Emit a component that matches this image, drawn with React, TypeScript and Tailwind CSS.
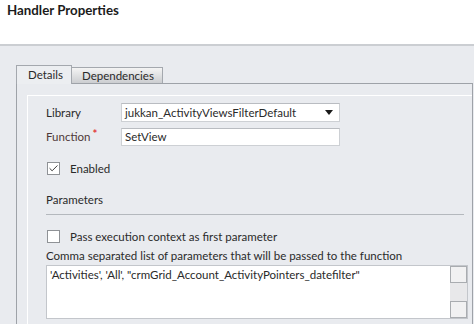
import { Check } from 'lucide-react'

function Checkbox({ checked }: { checked?: boolean }) {
  return (
    <div className="w-[13px] h-[13px] shrink-0 bg-white border border-[#8f9296] flex items-center justify-center">
      {checked && <Check size={11} strokeWidth={2} className="text-[#2b2b2b]" />}
    </div>
  )
}

export default function App() {
  return (
    <div
      className="w-[474px] h-[324px] overflow-hidden bg-white flex flex-col text-[11.5px] text-[#2a2a2a]"
      style={{ fontFamily: 'Lato, "Noto Sans", sans-serif' }}
    >
      {/* Title */}
      <div className="h-[44px] shrink-0 px-[7px] pt-[2px] leading-[17px]">
        <span className="font-bold text-[13.3px] text-[#1b1b1b]">Handler Properties</span>
      </div>

      {/* Gray section */}
      <div className="flex-1 min-h-0 bg-[#e9ebef] border-t-2 border-[#cbced2] pl-[16px] pt-[19px] flex flex-col">
        {/* Tabs */}
        <div className="flex items-end h-[19px] shrink-0">
          <div className="w-[56px] h-[19px] border border-b-0 border-[#a4a8ae] bg-[#eceef1] pl-[11px] leading-[18px] z-10">
            Details
          </div>
          <div className="w-[91px] h-[17px] border border-l-0 border-b-0 border-[#a4a8ae] bg-gradient-to-b from-[#f4f4f4] to-[#c9cbce] pl-[10px] leading-[16px]">
            Dependencies
          </div>
          <div className="flex-1" />
        </div>

        {/* Tab content */}
        <div className="flex-1 -mt-px border border-b-0 border-[#9ea2a8] mr-[1px] pl-[10px] pt-[11px] flex flex-col">
          <div className="flex-1 border-l border-t border-white pl-[18px] pt-[7px] pr-[4px] flex flex-col">
            {/* Library */}
            <div className="flex items-center h-[19px] shrink-0">
              <span className="w-[75px]">Library</span>
              <div className="w-[219px] h-[19px] bg-white border border-[#cdd0d4] border-t-[#b9bcc1] flex items-center justify-between pl-[3px] pr-[6px]">
                <span>jukkan_ActivityViewsFilterDefault</span>
                <svg width="8" height="5" viewBox="0 0 8 5">
                  <path d="M0 0 H8 L4 5 Z" fill="#1a1a1a" />
                </svg>
              </div>
            </div>

            {/* Function */}
            <div className="flex items-center h-[18px] mt-[6px] shrink-0">
              <span className="w-[75px] text-[#4e3838]">
                Function<span className="text-[#e23a3a] font-bold relative -top-[3px] ml-[2px]">*</span>
              </span>
              <div className="w-[219px] h-[18px] bg-white border border-[#cdd0d4] border-t-[#b9bcc1] pl-[3px] leading-[16px]">
                SetView
              </div>
            </div>

            {/* Enabled */}
            <div className="flex items-center gap-[10px] h-[13px] mt-[16px] pl-[1px] shrink-0">
              <Checkbox checked />
              <span>Enabled</span>
            </div>

            {/* Parameters */}
            <div className="mt-[17px] h-[16px] leading-[16px] shrink-0">Parameters</div>
            <div className="h-px bg-[#b4b8bd] mt-[6px] mr-[4px] shrink-0" />

            {/* Pass context */}
            <div className="flex items-center gap-[10px] h-[13px] mt-[15px] pl-[1px] shrink-0">
              <Checkbox />
              <span>Pass execution context as first parameter</span>
            </div>

            <div className="mt-[5px] h-[16px] leading-[16px] shrink-0">
              Comma separated list of parameters that will be passed to the function
            </div>

            {/* Textarea */}
            <div className="mt-[1px] h-[54px] shrink-0 bg-white border border-[#c3c6cb] flex">
              <div className="flex-1 pl-[3px] pt-[1px] leading-[15px]">
                'Activities', 'All', "crmGrid_Account_ActivityPointers_datefilter"
              </div>
              <div className="w-[17px] flex flex-col bg-[#e8e8ea]">
                <div className="h-[17px] border border-[#a9acb0] bg-[#f1f1f2]" />
                <div className="flex-1" />
                <div className="h-[17px] border border-[#a9acb0] bg-[#f1f1f2]" />
              </div>
            </div>
          </div>
        </div>
      </div>
    </div>
  )
}
